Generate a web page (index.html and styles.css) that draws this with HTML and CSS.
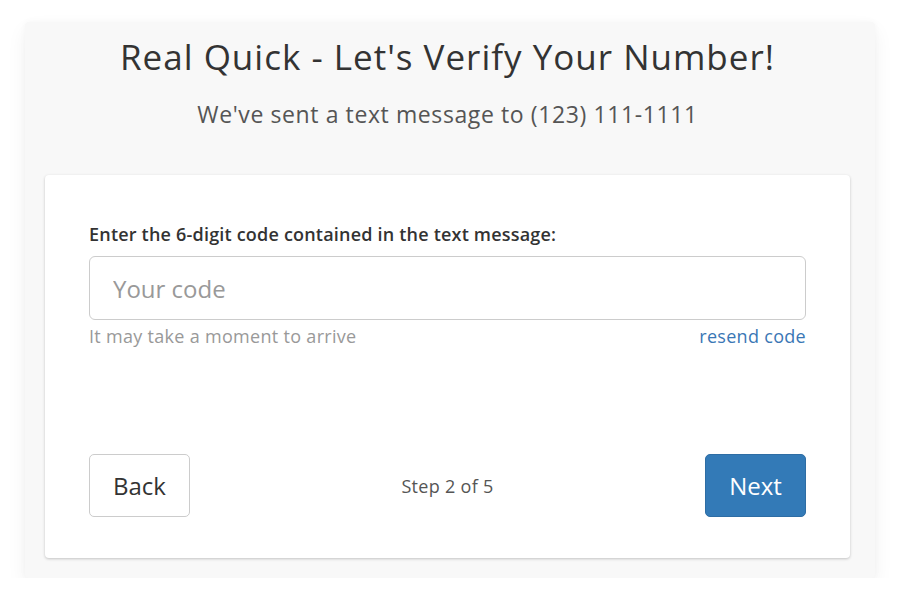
FILE: index.html
```html
<!DOCTYPE html>
<html lang="en">
<head>
    <meta charset="UTF-8">
    <meta name="viewport" content="width=device-width, initial-scale=1.0">
    <title>Verify Your Number</title>
    <link rel="stylesheet" href="styles.css">
</head>
<body>
    <div class="verify-panel">
        <h1 class="verify-title">Real Quick - Let's Verify Your Number!</h1>
        <p class="verify-subtitle">We've sent a text message to (123) 111-1111</p>
        <div class="verify-card">
            <label class="code-label" for="code">Enter the 6-digit code contained in the text message:</label>
            <input type="text" id="code" class="code-input" placeholder="Your code">
            <div class="help-row">
                <span>It may take a moment to arrive</span>
                <a href="#" class="resend-link">resend code</a>
            </div>
            <div class="actions">
                <button class="btn">Back</button>
                <span class="step">Step 2 of 5</span>
                <button class="btn btn-primary">Next</button>
            </div>
        </div>
    </div>
</body>
</html>
```

FILE: styles.css
```css
body {
    font-family: 'Open Sans', 'Noto Sans', sans-serif;
    margin: 0;
    padding: 22px 25px 0;
    background-color: #fff;
    color: #333;
}

.verify-panel {
    width: 850px;
    height: 556px;
    box-sizing: border-box;
    padding: 15px 25px 20px 20px;
    background-color: #f8f8f8;
    border-radius: 4px;
    box-shadow: 0 8px 20px rgba(0, 0, 0, 0.06), 0 0 6px rgba(0, 0, 0, 0.03);
}

.verify-title {
    margin: 0;
    font-size: 35px;
    font-weight: 400;
    line-height: 40px;
    letter-spacing: 1px;
    text-align: center;
    color: #333;
}

.verify-subtitle {
    margin: 22px 0 0;
    font-size: 23px;
    line-height: 30px;
    letter-spacing: 0.6px;
    text-align: center;
    color: #555;
}

.verify-card {
    margin-top: 46px;
    padding: 48px 44px 41px 44px;
    background-color: #fff;
    border-radius: 4px;
    box-shadow: 0 1px 3px rgba(0, 0, 0, 0.22);
}

.code-label {
    display: block;
    font-size: 18px;
    font-weight: 600;
    line-height: 22px;
    letter-spacing: 0.2px;
    color: #333;
}

.code-input {
    display: block;
    width: 100%;
    height: 64px;
    box-sizing: border-box;
    margin-top: 11px;
    padding: 0 23px;
    font-family: inherit;
    font-size: 24px;
    color: #333;
    border: 1px solid #ccc;
    border-radius: 6px;
    outline: none;
}

.code-input::placeholder {
    color: #999;
}

.help-row {
    display: flex;
    justify-content: space-between;
    margin-top: 4px;
    font-size: 18px;
    line-height: 24px;
    letter-spacing: 0.3px;
    color: #999;
}

.resend-link {
    color: #3a77b5;
    text-decoration: none;
}

.actions {
    display: flex;
    align-items: center;
    justify-content: space-between;
    margin-top: 106px;
}

.btn {
    width: 101px;
    height: 63px;
    font-family: inherit;
    font-size: 24px;
    color: #333;
    background-color: #fff;
    border: 1px solid #ccc;
    border-radius: 5px;
    cursor: pointer;
}

.btn-primary {
    color: #fff;
    background-color: #337ab7;
    border-color: #2e6da4;
}

.step {
    font-size: 18px;
    letter-spacing: 0.3px;
    color: #555;
}
```
